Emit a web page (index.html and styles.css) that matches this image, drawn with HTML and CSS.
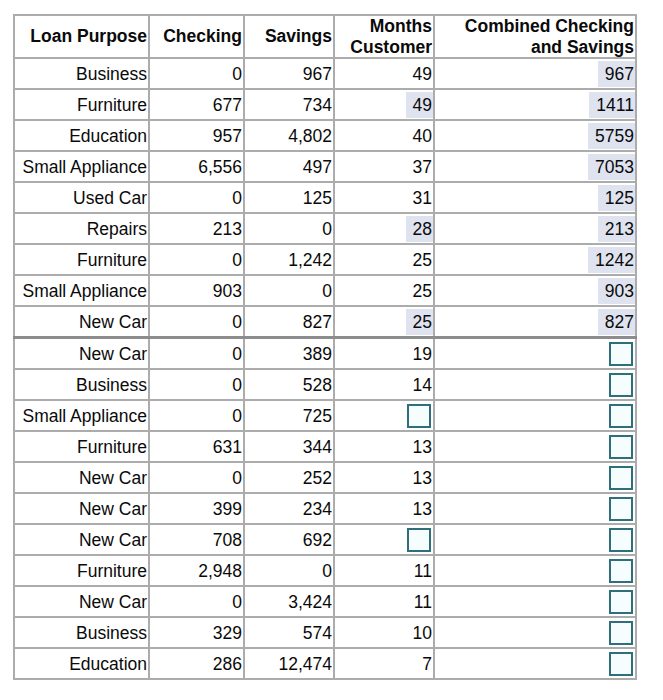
FILE: index.html
```html
<!DOCTYPE html>
<html>
<head>
<meta charset="utf-8">
<link rel="stylesheet" href="styles.css">
</head>
<body>
<div class="wrap">
<table class="loans">
  <colgroup>
    <col class="c1"><col class="c2"><col class="c3"><col class="c4"><col class="c5">
  </colgroup>
  <thead>
    <tr><th>Loan Purpose</th><th>Checking</th><th>Savings</th><th>Months<br>Customer</th><th>Combined Checking<br>and Savings</th></tr>
  </thead>
  <tbody>
    <tr><td>Business</td><td>0</td><td>967</td><td>49</td><td><span class="hl">967</span></td></tr>
    <tr><td>Furniture</td><td>677</td><td>734</td><td><span class="hl">49</span></td><td><span class="hl">1411</span></td></tr>
    <tr><td>Education</td><td>957</td><td>4,802</td><td>40</td><td><span class="hl">5759</span></td></tr>
    <tr><td>Small Appliance</td><td>6,556</td><td>497</td><td>37</td><td><span class="hl">7053</span></td></tr>
    <tr><td>Used Car</td><td>0</td><td>125</td><td>31</td><td><span class="hl">125</span></td></tr>
    <tr><td>Repairs</td><td>213</td><td>0</td><td><span class="hl">28</span></td><td><span class="hl">213</span></td></tr>
    <tr><td>Furniture</td><td>0</td><td>1,242</td><td>25</td><td><span class="hl">1242</span></td></tr>
    <tr><td>Small Appliance</td><td>903</td><td>0</td><td>25</td><td><span class="hl">903</span></td></tr>
    <tr class="sep"><td>New Car</td><td>0</td><td>827</td><td><span class="hl">25</span></td><td><span class="hl">827</span></td></tr>
    <tr><td>New Car</td><td>0</td><td>389</td><td>19</td><td><span class="box"></span></td></tr>
    <tr><td>Business</td><td>0</td><td>528</td><td>14</td><td><span class="box"></span></td></tr>
    <tr><td>Small Appliance</td><td>0</td><td>725</td><td><span class="box"></span></td><td><span class="box"></span></td></tr>
    <tr><td>Furniture</td><td>631</td><td>344</td><td>13</td><td><span class="box"></span></td></tr>
    <tr><td>New Car</td><td>0</td><td>252</td><td>13</td><td><span class="box"></span></td></tr>
    <tr><td>New Car</td><td>399</td><td>234</td><td>13</td><td><span class="box"></span></td></tr>
    <tr><td>New Car</td><td>708</td><td>692</td><td><span class="box"></span></td><td><span class="box"></span></td></tr>
    <tr><td>Furniture</td><td>2,948</td><td>0</td><td>11</td><td><span class="box"></span></td></tr>
    <tr><td>New Car</td><td>0</td><td>3,424</td><td>11</td><td><span class="box"></span></td></tr>
    <tr><td>Business</td><td>329</td><td>574</td><td>10</td><td><span class="box"></span></td></tr>
    <tr><td>Education</td><td>286</td><td>12,474</td><td>7</td><td><span class="box"></span></td></tr>
  </tbody>
</table>
</div>
</body>
</html>
```
FILE: styles.css
```css
html, body {
  margin: 0;
  padding: 0;
  background: #ffffff;
}
.wrap {
  padding: 14px 0 0 13px;
}
.loans {
  border-collapse: collapse;
  table-layout: fixed;
  width: 624px;
  font-family: "Liberation Sans", Arial, sans-serif;
  font-size: 17.5px;
  color: #0a0a0a;
}
.c1 { width: 135px; }
.c2 { width: 95px; }
.c3 { width: 90px; }
.c4 { width: 100px; }
.c5 { width: 202px; }
.loans th, .loans td {
  border: 2px solid #acacac;
  text-align: right;
  padding: 0 1px 0 0;
  white-space: nowrap;
}
.loans th {
  height: 40px;
  line-height: 20.5px;
  font-weight: bold;
  vertical-align: middle;
}
.loans td {
  height: 29px;
  line-height: 20px;
  vertical-align: middle;
}
.loans tr.sep td {
  border-bottom: 3px solid #8c8c8c;
}
.hl {
  display: inline-block;
  background: #dfe3ef;
  padding: 0 1px 0 7px;
  margin-right: -1px;
  height: 26px;
  line-height: 26px;
  vertical-align: middle;
}
.box {
  display: inline-block;
  width: 20px;
  height: 20px;
  border: 2px solid #2f6e7b;
  background: #f6fdfe;
  margin-right: 1px;
  vertical-align: middle;
}
```
